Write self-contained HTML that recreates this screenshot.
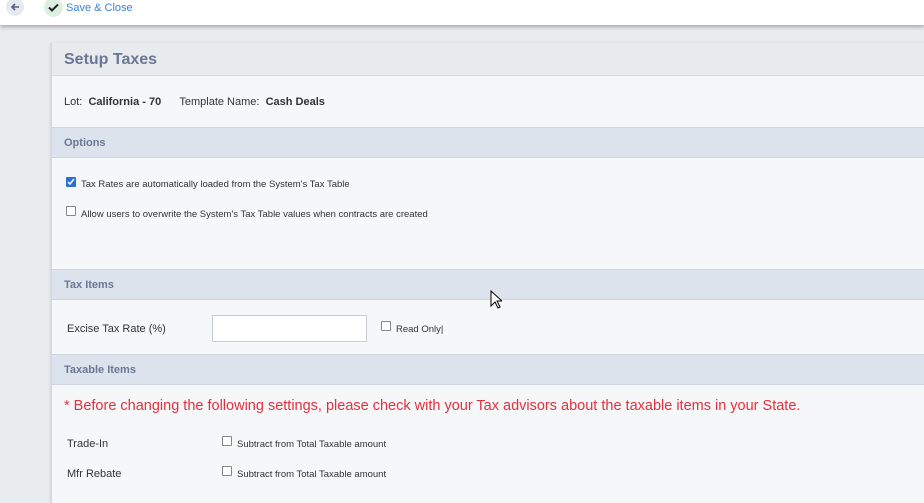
<!DOCTYPE html>
<html><head><style>
*{margin:0;padding:0;box-sizing:border-box}
body{width:924px;height:498px;overflow:hidden;background:#e9ecef;font-family:"Liberation Sans",Arial,sans-serif;position:relative}
.top{position:absolute;left:0;top:0;width:924px;height:25px;background:#fff;box-shadow:0 2px 4px rgba(0,0,0,.3)}
.back{position:absolute;left:6px;top:-2px;width:18px;height:18px;border-radius:50%;background:#e6e9ef}
.chk{position:absolute;left:44px;top:-2px;width:19px;height:19px;border-radius:50%;background:#dcefe0}
.save{position:absolute;left:66px;top:2px;font-size:11px;color:#3b82d6}
.panel{position:absolute;left:51px;top:43px;width:880px;height:460px;background:#f6f7f9;border-left:1px solid #d5d9de;box-shadow:-1px 0 2px rgba(0,0,0,.1)}
.abs{position:absolute}
.title{left:0;top:0;width:100%;height:33px;background:#e8ebee;border-bottom:1px solid #d4d8dd}
.title span{position:absolute;left:12px;top:8px;font-size:16px;font-weight:bold;color:#6a7896}
.hdr{left:0;width:100%;height:31px;background:#dde3ec;border-top:1px solid #cfd5de;border-bottom:1px solid #cfd5de}
.hdr span{position:absolute;left:12px;top:9px;font-size:11px;font-weight:bold;color:#6a7896}
.t{position:absolute;font-size:11px;color:#333;white-space:nowrap}
.s{font-size:9.5px}
.cb{position:absolute;width:10px;height:10px;border:1px solid #888;background:#fff;border-radius:1px}
</style></head><body>
<div class="top">
<div class="back"><svg width="18" height="18" viewBox="0 0 18 18"><path d="M13 9H6M9 6L6 9l3 3" stroke="#56607a" stroke-width="1.6" fill="none"/></svg></div>
<div class="chk"><svg width="19" height="19" viewBox="0 0 19 19"><path d="M5 9.5l3 3 6-6" stroke="#222" stroke-width="2" fill="none"/></svg></div>
<div class="save">Save &amp; Close</div>
</div>
<div class="panel">
<div class="abs title"><span>Setup Taxes</span></div>
<div class="t" style="left:12px;top:53px">Lot:&nbsp; <b>California - 70</b> &nbsp;&nbsp;&nbsp;&nbsp; Template Name:&nbsp; <b>Cash Deals</b></div>
<div class="abs hdr" style="top:84px"><span>Options</span></div>
<div class="cb" style="left:14px;top:134px;background:#2a6fd6;border-color:#2a6fd6"><svg width="8" height="8" viewBox="0 0 8 8" style="position:absolute;left:0;top:0"><path d="M1 4l2 2 4-5" stroke="#fff" stroke-width="1.5" fill="none"/></svg></div>
<div class="t s" style="left:29px;top:136px">Tax Rates are automatically loaded from the System's Tax Table</div>
<div class="cb" style="left:14px;top:163px"></div>
<div class="t s" style="left:29px;top:166px">Allow users to overwrite the System's Tax Table values when contracts are created</div>
<div class="abs hdr" style="top:226px"><span>Tax Items</span></div>
<div class="t" style="left:15px;top:280px">Excise Tax Rate (%)</div>
<div class="abs" style="left:160px;top:272px;width:155px;height:27px;background:#fff;border:1px solid #c8ccd2"></div>
<div class="cb" style="left:329px;top:278px"></div>
<div class="t s" style="left:344px;top:281px">Read Only|</div>
<div class="abs hdr" style="top:311px"><span>Taxable Items</span></div>
<div class="t" style="left:12px;top:355px;font-size:14.5px;color:#e0323e">* Before changing the following settings, please check with your Tax advisors about the taxable items in your State.</div>
<div class="t" style="left:15px;top:395px">Trade-In</div>
<div class="cb" style="left:170px;top:393px"></div>
<div class="t s" style="left:185px;top:396px">Subtract from Total Taxable amount</div>
<div class="t" style="left:15px;top:425px">Mfr Rebate</div>
<div class="cb" style="left:170px;top:423px"></div>
<div class="t s" style="left:185px;top:426px">Subtract from Total Taxable amount</div>
</div>
<svg style="position:absolute;left:490px;top:290px" width="12" height="20" viewBox="0 0 12 20"><path d="M1 1v15l4-4 3 6 2-1-3-6h5z" fill="#fff" stroke="#000" stroke-width="1"/></svg>
</body></html>
